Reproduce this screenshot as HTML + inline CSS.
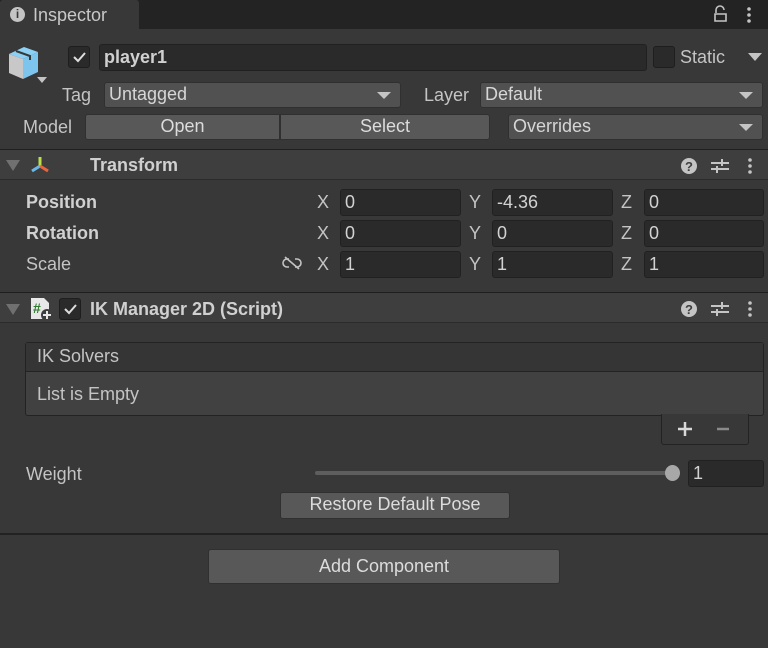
<!DOCTYPE html>
<html><head><style>
*{box-sizing:border-box;margin:0;padding:0}
body{width:768px;height:648px;background:#383838;font-family:"Liberation Sans",sans-serif;font-size:18px;color:#c4c4c4;position:relative;overflow:hidden}
.a{position:absolute}
.f{position:absolute;background:#2a2a2a;border:1px solid #212121;border-radius:3px;padding-left:4px;line-height:24px;color:#d2d2d2}
.dd{position:absolute;background:#515151;border:1px solid #303030;border-radius:3px;padding-left:4px;line-height:23px;color:#d6d6d6}
.dd:after{content:"";position:absolute;right:9px;top:9px;border-left:7px solid transparent;border-right:7px solid transparent;border-top:7px solid #c4c4c4}
.btn{position:absolute;background:#585858;border:1px solid #303030;border-radius:3px;text-align:center;line-height:23px;color:#dcdcdc}
.lbl{position:absolute;line-height:26px}
.b{font-weight:bold;color:#d0d0d0}
.hdr{position:absolute;left:0;width:768px;height:31px;background:#3e3e3e;border-top:1px solid #1f1f1f;border-bottom:1px solid #2b2b2b}
.tri{position:absolute;border-left:7px solid transparent;border-right:7px solid transparent;border-top:11px solid #707070}
.cb{position:absolute;width:22px;height:22px;background:#2a2a2a;border:1px solid #1e1e1e;border-radius:3px}
</style></head><body>
<div class="a" style="left:0;top:0;width:768px;height:29px;background:#232323"></div>
<div class="a" style="left:0;top:0;width:139px;height:29px;background:#383838;border-radius:3px 3px 0 0"></div>
<div class="a" style="left:10px;top:7px;width:15px;height:15px;border-radius:50%;background:#c4c4c4;color:#383838;font-size:12px;font-weight:bold;text-align:center;line-height:15px">i</div>
<div class="lbl" style="left:33px;top:2px;color:#c8c8c8">Inspector</div>
<svg class="a" style="left:712px;top:4px" width="50" height="22"><path d="M4 9v-3a4 4 0 0 1 8 0M3 10h11v7H3z" fill="none" stroke="#c4c4c4" stroke-width="1.6"/><circle cx="37" cy="5" r="1.8" fill="#c4c4c4"/><circle cx="37" cy="11" r="1.8" fill="#c4c4c4"/><circle cx="37" cy="17" r="1.8" fill="#c4c4c4"/></svg>
<svg class="a" style="left:6px;top:42px" width="44" height="44"><path d="M3 12 L18 5 L32 10 L17 17Z" fill="#8dd0f5"/><path d="M3 12 L17 17 L17 37 L3 31Z" fill="#c8c8c8"/><path d="M17 17 L32 10 L32 30 L17 37Z" fill="#7ec5ee"/><path d="M10 9 L24 14 L24 18" stroke="#383838" stroke-width="2" fill="none"/><path d="M36 35h10l-5 6z" fill="#c4c4c4" transform="translate(-5,0)"/></svg>
<div class="cb" style="left:68px;top:46px"><svg width="20" height="20"><path d="M5 10l4 4 7-8" stroke="#ddd" stroke-width="2" fill="none"/></svg></div>
<div class="f b" style="left:99px;top:44px;width:548px;height:27px;padding-left:4px">player1</div>
<div class="cb" style="left:653px;top:46px"></div>
<div class="lbl" style="left:680px;top:44px">Static</div>
<div class="a" style="left:748px;top:53px;border-left:7px solid transparent;border-right:7px solid transparent;border-top:8px solid #c4c4c4"></div>
<div class="lbl" style="left:62px;top:82px">Tag</div>
<div class="dd" style="left:104px;top:82px;width:297px;height:26px">Untagged</div>
<div class="lbl" style="left:424px;top:82px">Layer</div>
<div class="dd" style="left:480px;top:82px;width:283px;height:26px">Default</div>
<div class="lbl" style="left:23px;top:114px">Model</div>
<div class="btn" style="left:85px;top:114px;width:195px;height:26px;border-radius:3px 0 0 3px">Open</div>
<div class="btn" style="left:280px;top:114px;width:210px;height:26px;border-radius:0 3px 3px 0">Select</div>
<div class="dd" style="left:508px;top:114px;width:255px;height:26px">Overrides</div>

<div class="hdr" style="top:149px"></div>
<div class="tri" style="left:6px;top:160px"></div>
<svg class="a" style="left:28px;top:155px" width="24" height="22"><path d="M12 2v9" stroke="#b7e04a" stroke-width="3"/><path d="M12 11l-8 5" stroke="#6bb7e8" stroke-width="3"/><path d="M12 11l8 5" stroke="#e8663c" stroke-width="3"/></svg>
<div class="lbl b" style="left:90px;top:152px">Transform</div>
<svg class="a" style="left:680px;top:156px" width="84" height="20"><circle cx="9" cy="10" r="8" fill="#c4c4c4"/><text x="5" y="15" font-size="13" font-weight="bold" fill="#3e3e3e" font-family="Liberation Sans">?</text><path d="M31 7h18M31 13h18M42 3v7M37 10v7" stroke="#c4c4c4" stroke-width="2"/><circle cx="70" cy="4" r="1.8" fill="#c4c4c4"/><circle cx="70" cy="10" r="1.8" fill="#c4c4c4"/><circle cx="70" cy="16" r="1.8" fill="#c4c4c4"/></svg>

<div class="lbl b" style="left:26px;top:189px">Position</div>
<div class="lbl b" style="left:26px;top:220px">Rotation</div>
<div class="lbl" style="left:26px;top:251px">Scale</div>
<svg class="a" style="left:282px;top:255px" width="20" height="16"><path d="M7 4H5a4 4 0 0 0 0 8h2M13 4h2a4 4 0 0 1 0 8h-2M3 2l14 12" stroke="#c4c4c4" stroke-width="1.6" fill="none"/></svg>
<div class="lbl" style="left:317px;top:189px">X</div><div class="f" style="left:340px;top:189px;width:121px;height:27px">0</div>
<div class="lbl" style="left:469px;top:189px">Y</div><div class="f" style="left:492px;top:189px;width:121px;height:27px">-4.36</div>
<div class="lbl" style="left:621px;top:189px">Z</div><div class="f" style="left:644px;top:189px;width:120px;height:27px">0</div>
<div class="lbl" style="left:317px;top:220px">X</div><div class="f" style="left:340px;top:220px;width:121px;height:27px">0</div>
<div class="lbl" style="left:469px;top:220px">Y</div><div class="f" style="left:492px;top:220px;width:121px;height:27px">0</div>
<div class="lbl" style="left:621px;top:220px">Z</div><div class="f" style="left:644px;top:220px;width:120px;height:27px">0</div>
<div class="lbl" style="left:317px;top:251px">X</div><div class="f" style="left:340px;top:251px;width:121px;height:27px">1</div>
<div class="lbl" style="left:469px;top:251px">Y</div><div class="f" style="left:492px;top:251px;width:121px;height:27px">1</div>
<div class="lbl" style="left:621px;top:251px">Z</div><div class="f" style="left:644px;top:251px;width:120px;height:27px">1</div>

<div class="hdr" style="top:292px"></div>
<div class="tri" style="left:6px;top:304px"></div>
<svg class="a" style="left:29px;top:296px" width="26" height="26"><path d="M2 2h13l5 5v16H2z" fill="#e8e8e8"/><text x="4" y="17" font-size="14" font-weight="bold" fill="#2f7a2f" font-family="Liberation Sans">#</text><circle cx="18" cy="19" r="6" fill="#3e3e3e"/><path d="M18 15v8M14 19h8" stroke="#e8e8e8" stroke-width="2"/></svg>
<div class="cb" style="left:59px;top:298px"><svg width="20" height="20"><path d="M5 10l4 4 7-8" stroke="#ddd" stroke-width="2" fill="none"/></svg></div>
<div class="lbl b" style="left:90px;top:296px">IK Manager 2D (Script)</div>
<svg class="a" style="left:680px;top:299px" width="84" height="20"><circle cx="9" cy="10" r="8" fill="#c4c4c4"/><text x="5" y="15" font-size="13" font-weight="bold" fill="#3e3e3e" font-family="Liberation Sans">?</text><path d="M31 7h18M31 13h18M42 3v7M37 10v7" stroke="#c4c4c4" stroke-width="2"/><circle cx="70" cy="4" r="1.8" fill="#c4c4c4"/><circle cx="70" cy="10" r="1.8" fill="#c4c4c4"/><circle cx="70" cy="16" r="1.8" fill="#c4c4c4"/></svg>

<div class="a" style="left:25px;top:342px;width:739px;height:74px;border:1px solid #232323;border-radius:3px;background:#414141"></div>
<div class="a" style="left:26px;top:343px;width:737px;height:29px;background:#353535;border-bottom:1px solid #232323"></div>
<div class="lbl" style="left:37px;top:343px">IK Solvers</div>
<div class="lbl" style="left:37px;top:381px">List is Empty</div>
<div class="a" style="left:661px;top:414px;width:88px;height:31px;background:#383838;border:1px solid #232323;border-top:none;border-radius:0 0 3px 3px"></div>
<svg class="a" style="left:676px;top:420px" width="60" height="18"><path d="M9 2v14M2 9h14" stroke="#d8d8d8" stroke-width="2.5"/><path d="M41 9h12" stroke="#8a8a8a" stroke-width="2.5"/></svg>

<div class="lbl" style="left:26px;top:461px">Weight</div>
<div class="a" style="left:315px;top:471px;width:358px;height:4px;background:#5e5e5e;border-radius:2px"></div>
<div class="a" style="left:665px;top:465px;width:15px;height:16px;border-radius:50%;background:#a8a8a8"></div>
<div class="f" style="left:688px;top:460px;width:76px;height:27px">1</div>
<div class="btn" style="left:280px;top:492px;width:230px;height:27px">Restore Default Pose</div>
<div class="a" style="left:0;top:533px;width:768px;height:2px;background:#222"></div>
<div class="btn" style="left:208px;top:549px;width:352px;height:35px;line-height:33px">Add Component</div>
</body></html>
